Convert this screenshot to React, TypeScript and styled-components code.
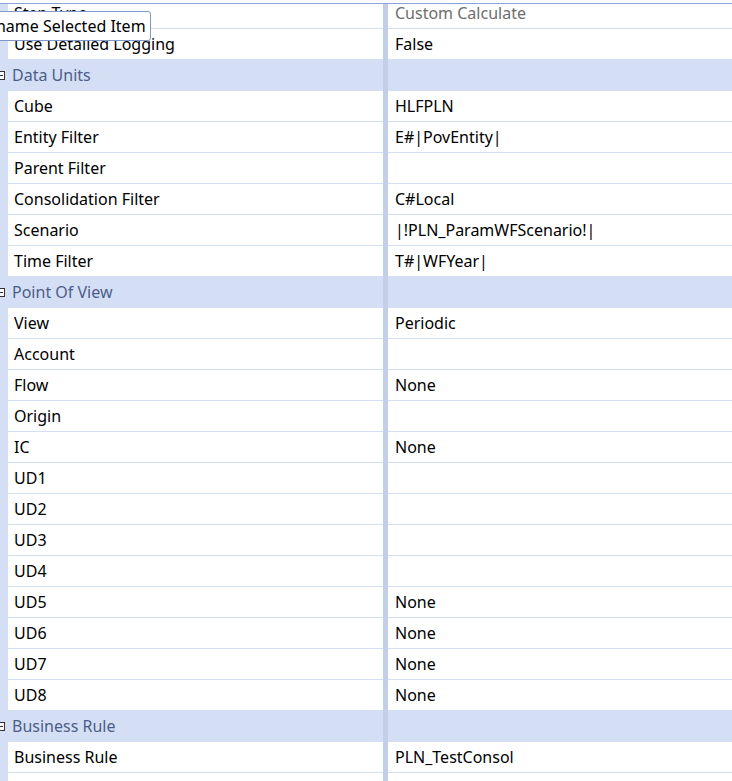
import React from "react";
import styled, { createGlobalStyle } from "styled-components";

const GlobalStyle = createGlobalStyle`
  html, body { margin: 0; padding: 0; background: #ffffff; overflow: hidden; }
  body { font-family: "Noto Sans", "Open Sans", sans-serif; }
`;

const MARGIN = "#d4dff5";
const LINE = "#d4dff5";
const DIVIDER = "#c3cfe6";

const Frame = styled.div`
  position: relative;
  width: 732px;
  height: 781px;
  padding-top: 3px;
  box-sizing: border-box;
  background: #ffffff;
`;

const Viewport = styled.div`
  height: 778px;
  border-top: 1px solid #8aa2d6;
  overflow: hidden;
  box-sizing: border-box;
`;

const Content = styled.div`
  margin-top: -6px;
  display: flex;
  flex-direction: column;
`;

const Row = styled.div<{ $category?: boolean }>`
  display: grid;
  grid-template-columns: 8px 375px 5px 1fr;
  height: 31px;
  background: ${(p) => (p.$category ? MARGIN : "#ffffff")};
`;

const Gutter = styled.div`
  background: ${MARGIN};
  position: relative;
`;

const NameCell = styled.div`
  padding-left: 6px;
  line-height: 30px;
  height: 30px;
  border-bottom: 1px solid ${LINE};
  font-size: 16px;
  color: #000000;
  white-space: nowrap;
  overflow: hidden;
`;

const Divider = styled.div`
  background: ${DIVIDER};
`;

const ValueCell = styled.div<{ $readonly?: boolean }>`
  padding-left: 7px;
  line-height: 30px;
  height: 30px;
  border-bottom: 1px solid ${LINE};
  font-size: 16px;
  color: ${(p) => (p.$readonly ? "#6d6d6d" : "#000000")};
  white-space: nowrap;
  overflow: hidden;
`;

const CategoryLabel = styled.div`
  padding-left: 4px;
  line-height: 31px;
  font-size: 16px;
  color: #4e5d88;
  white-space: nowrap;
`;

const CategoryFill = styled.div``;

const Expander = styled.div`
  position: absolute;
  left: -4px;
  top: 11px;
  width: 7px;
  height: 7px;
  border: 1px solid #333333;
  background: #ffffff;
  &::after {
    content: "";
    position: absolute;
    left: 2px;
    right: 1px;
    top: 3px;
    height: 1px;
    background: #333333;
  }
`;

const Tooltip = styled.div`
  position: absolute;
  left: -28px;
  top: 11px;
  height: 28px;
  padding: 0 4px;
  border: 1px solid #8098c8;
  border-radius: 3px;
  background: #ffffff;
  font-size: 16px;
  line-height: 28px;
  color: #000000;
  white-space: nowrap;
`;

type Item =
  | { kind: "cat"; label: string }
  | { kind: "prop"; name: string; value?: string; readonly?: boolean };

const items: Item[] = [
  { kind: "prop", name: "Step Type", value: "Custom Calculate", readonly: true },
  { kind: "prop", name: "Use Detailed Logging", value: "False" },
  { kind: "cat", label: "Data Units" },
  { kind: "prop", name: "Cube", value: "HLFPLN" },
  { kind: "prop", name: "Entity Filter", value: "E#|PovEntity|" },
  { kind: "prop", name: "Parent Filter" },
  { kind: "prop", name: "Consolidation Filter", value: "C#Local" },
  { kind: "prop", name: "Scenario", value: "|!PLN_ParamWFScenario!|" },
  { kind: "prop", name: "Time Filter", value: "T#|WFYear|" },
  { kind: "cat", label: "Point Of View" },
  { kind: "prop", name: "View", value: "Periodic" },
  { kind: "prop", name: "Account" },
  { kind: "prop", name: "Flow", value: "None" },
  { kind: "prop", name: "Origin" },
  { kind: "prop", name: "IC", value: "None" },
  { kind: "prop", name: "UD1" },
  { kind: "prop", name: "UD2" },
  { kind: "prop", name: "UD3" },
  { kind: "prop", name: "UD4" },
  { kind: "prop", name: "UD5", value: "None" },
  { kind: "prop", name: "UD6", value: "None" },
  { kind: "prop", name: "UD7", value: "None" },
  { kind: "prop", name: "UD8", value: "None" },
  { kind: "cat", label: "Business Rule" },
  { kind: "prop", name: "Business Rule", value: "PLN_TestConsol" },
  { kind: "prop", name: "Function Name" },
];

export default function App() {
  return (
    <>
      <GlobalStyle />
      <Frame>
        <Viewport>
          <Content>
            {items.map((it, i) =>
              it.kind === "cat" ? (
                <Row key={i} $category>
                  <Gutter>
                    <Expander />
                  </Gutter>
                  <CategoryLabel>{it.label}</CategoryLabel>
                  <Divider />
                  <CategoryFill />
                </Row>
              ) : (
                <Row key={i}>
                  <Gutter />
                  <NameCell>{it.name}</NameCell>
                  <Divider />
                  <ValueCell $readonly={it.readonly}>{it.value ?? ""}</ValueCell>
                </Row>
              )
            )}
          </Content>
        </Viewport>
        <Tooltip>Rename Selected Item</Tooltip>
      </Frame>
    </>
  );
}
